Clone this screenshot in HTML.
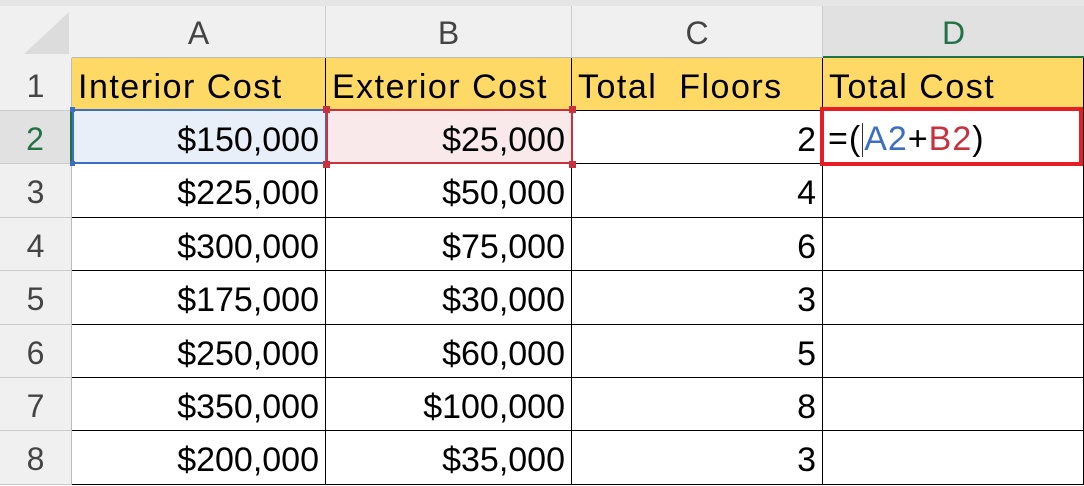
<!DOCTYPE html>
<html><head><style>
body{margin:0;width:1084px;height:486px;background:#fff;overflow:hidden;font-family:"Liberation Sans",sans-serif;position:relative}
.a{position:absolute;box-sizing:border-box}
.h{background:#f0f0f0;color:#444;font-size:32px;display:flex;align-items:center;justify-content:center;padding-top:4px}
.c{font-size:34px;color:#000;display:flex;align-items:center;white-space:nowrap;padding:6px 6px 0 6px}
.r{justify-content:flex-end}
.t{letter-spacing:1.5px}
</style></head><body>
<div class="a" style="left:0;top:0;width:1084px;height:6px;background:#e6e6e6"></div>
<div class="a" style="left:0;top:6px;width:72px;height:52px;background:#f0f0f0"></div>
<svg class="a" style="left:22px;top:10px" width="50" height="46"><polygon points="47,2 47,44 2,44" fill="#dcdcdc"/></svg>
<div class="a h" style="left:72px;top:6px;width:254px;height:52px;border-right:1px solid #ccc;border-bottom:1px solid #bbb">A</div>
<div class="a h" style="left:326px;top:6px;width:246px;height:52px;border-right:1px solid #ccc;border-bottom:1px solid #bbb">B</div>
<div class="a h" style="left:572px;top:6px;width:251px;height:52px;border-right:1px solid #ccc;border-bottom:1px solid #bbb">C</div>
<div class="a h" style="left:823px;top:6px;width:261px;height:52px;background:#e1e1e1;color:#217346;border-bottom:2px solid #217346">D</div>
<div id="rows"></div>
<script>
var ys=[58,111,164,218,271,325,378,431,485];
var data=[["Interior Cost","Exterior Cost","Total&nbsp; Floors","Total Cost"],
["$150,000","$25,000","2",""],["$225,000","$50,000","4",""],["$300,000","$75,000","6",""],["$175,000","$30,000","3",""],["$250,000","$60,000","5",""],["$350,000","$100,000","8",""],["$200,000","$35,000","3",""]];
var xs=[72,326,572,823,1084];var h="";
for(var i=0;i<8;i++){var t=ys[i],ht=ys[i+1]-t;
var sel=i==1;
h+='<div class="a h" style="left:0;top:'+t+'px;width:72px;height:'+ht+'px;border-bottom:1px solid #ccc;'+(sel?'background:#e1e1e1;color:#217346;border-right:2px solid #217346':'border-right:1px solid #bbb')+'">'+(i+1)+'</div>';
for(var j=0;j<4;j++){var bg=i==0?'#ffd966':'#fff';if(i==1&&j==0)bg='#e9eff8';if(i==1&&j==1)bg='#f9e9ea';
h+='<div class="a c'+(i>0&&j<3?' r':'')+(i==0?' t':'')+'" style="left:'+xs[j]+'px;top:'+t+'px;width:'+(xs[j+1]-xs[j])+'px;height:'+ht+'px;background:'+bg+';border-right:1px solid #000;border-bottom:1px solid #000">'+data[i][j]+'</div>';}}
document.getElementById('rows').innerHTML=h;
</script>
<div class="a" style="left:72px;top:109px;width:255px;height:55px;border:2px solid #3c6fc4"></div>
<div class="a" style="left:326px;top:109px;width:247px;height:55px;border:2px solid #c9323d"></div>
<div class="a" style="left:323px;top:106px;width:7px;height:7px;background:#c9323d"></div>
<div class="a" style="left:569px;top:106px;width:7px;height:7px;background:#c9323d"></div>
<div class="a" style="left:323px;top:161px;width:7px;height:7px;background:#c9323d"></div>
<div class="a" style="left:569px;top:161px;width:7px;height:7px;background:#c9323d"></div>
<div class="a" style="left:70px;top:107px;width:5px;height:5px;background:#3c6fc4"></div>
<div class="a" style="left:70px;top:161px;width:5px;height:5px;background:#3c6fc4"></div>
<div class="a" style="left:820px;top:107px;width:263px;height:59px;border:4px solid #e81c24;background:#fff"></div>
<div class="a c" style="left:824px;top:111px;height:51px;padding-left:4px;letter-spacing:1px">=(<span style="border-left:1px solid #333;height:34px;margin:0 1px"></span><span style="color:#3c6fc4">A2</span>+<span style="color:#c9323d">B2</span>)</div>
</body></html>
